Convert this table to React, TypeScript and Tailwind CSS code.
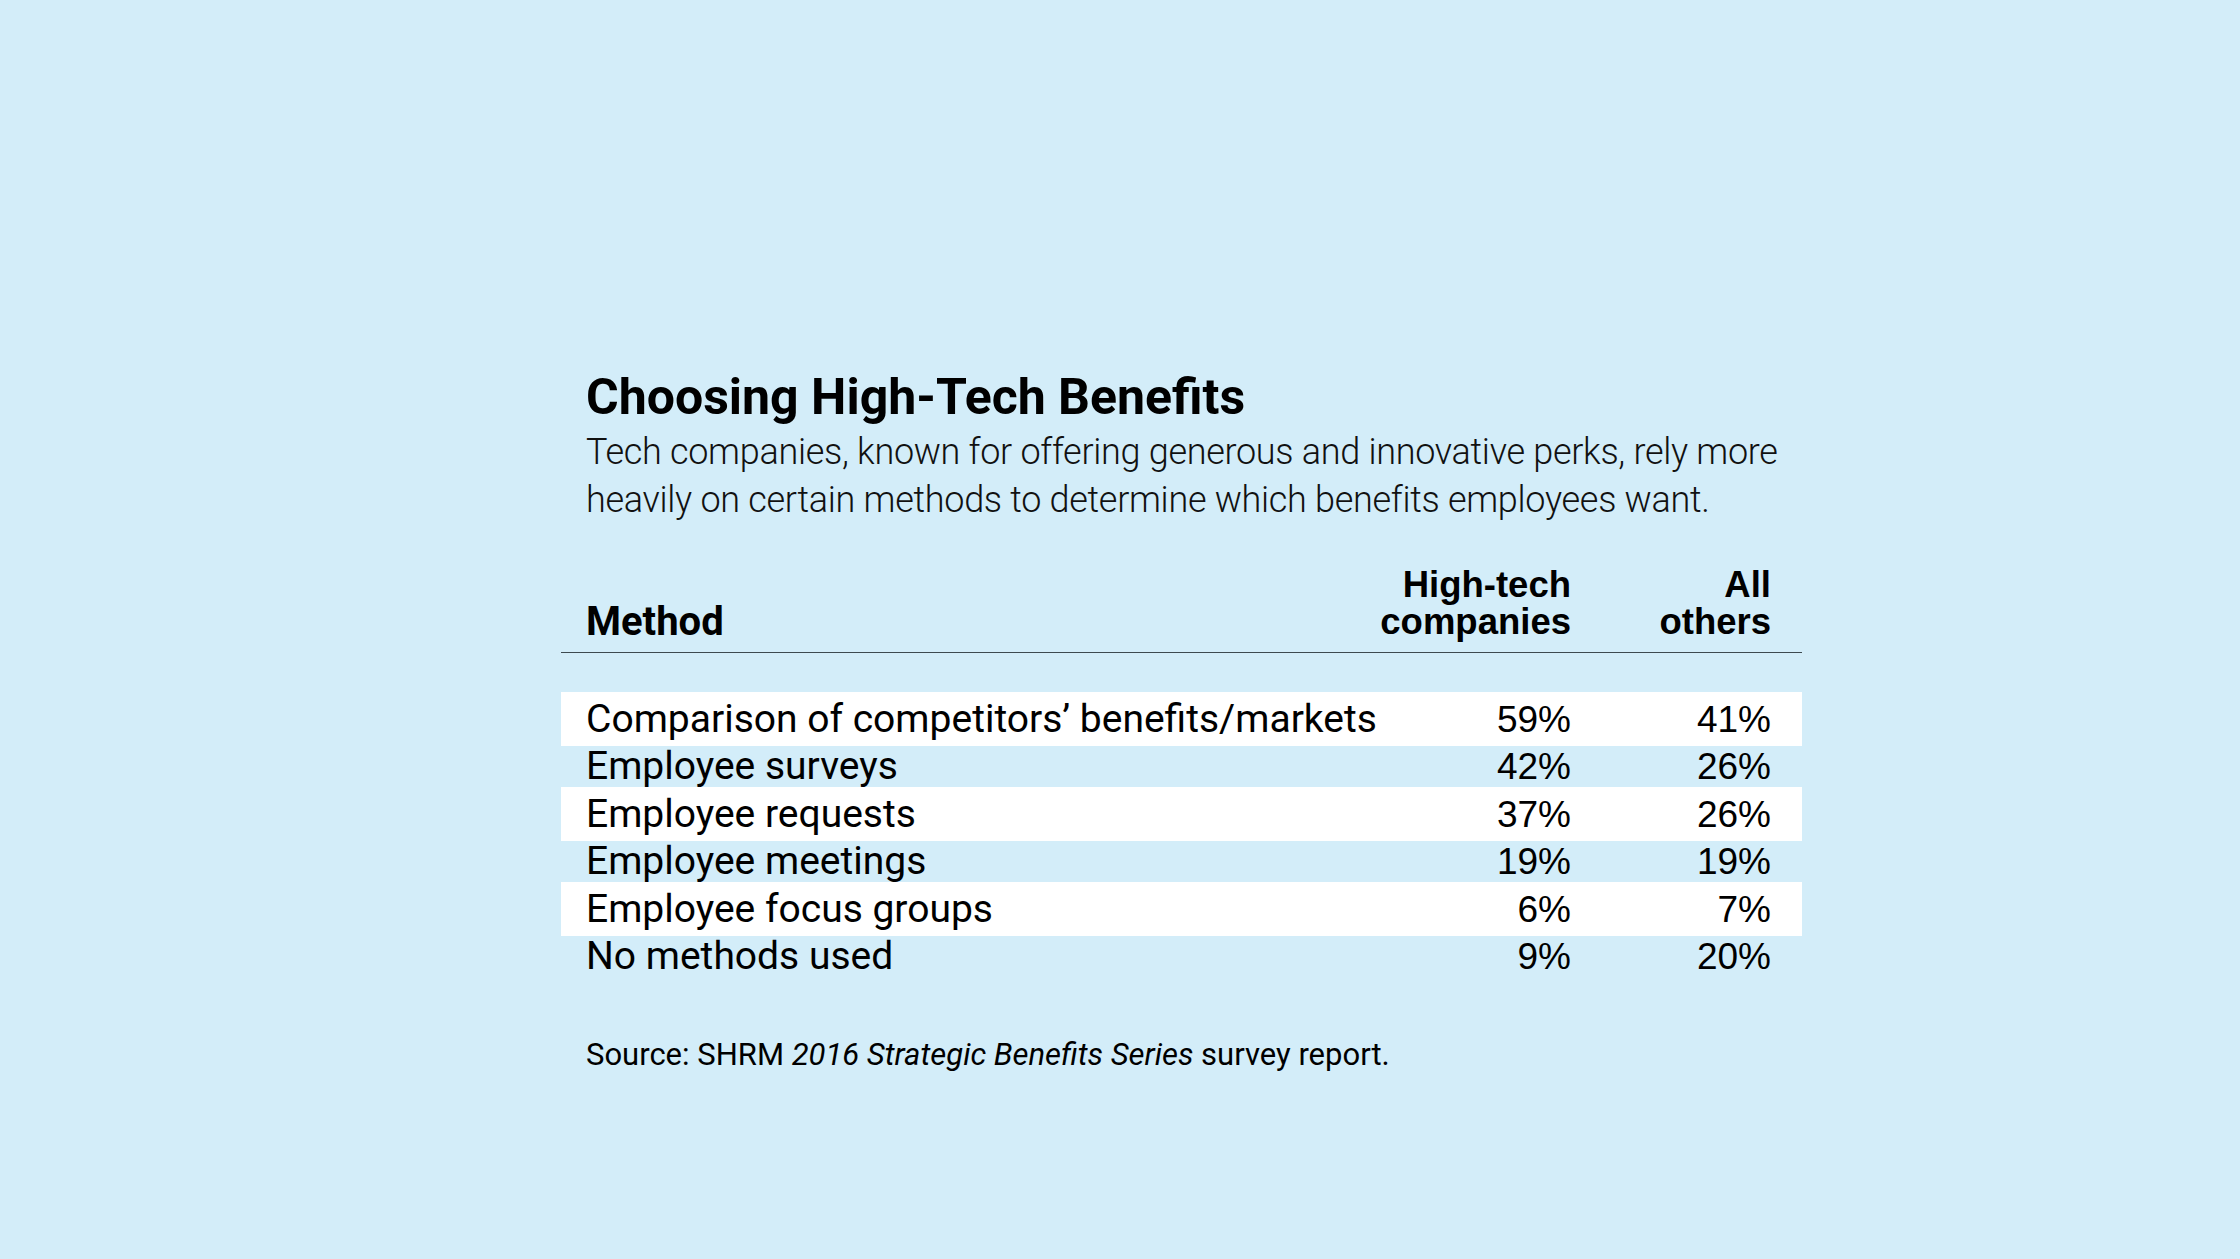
import React from 'react';

const rows = [
  { method: 'Comparison of competitors’ benefits/markets', tech: '59%', others: '41%' },
  { method: 'Employee surveys', tech: '42%', others: '26%' },
  { method: 'Employee requests', tech: '37%', others: '26%' },
  { method: 'Employee meetings', tech: '19%', others: '19%' },
  { method: 'Employee focus groups', tech: '6%', others: '7%' },
  { method: 'No methods used', tech: '9%', others: '20%' },
];

function App() {
  return (
    <div className="min-h-screen w-full bg-[#d3edf9] text-black font-['Roboto','Liberation_Sans',sans-serif]">
      <div className="ml-[561px] w-[1241px] pt-[369px] pb-20">
        {/* Title */}
        <div className="pl-[25px]">
          <h1 className="text-[50px] leading-[56px] font-bold">Choosing High-Tech Benefits</h1>
          <p className="mt-[3px] text-[36px] leading-[48px] font-light tracking-[-0.3px] text-[#111]">
            Tech companies, known for offering generous and innovative perks, rely more
            <br />
            heavily on certain methods to determine which benefits employees want.
          </p>
        </div>

        {/* Table header */}
        <div className="mt-[42px] grid grid-cols-[minmax(0,1fr)_200px_200px] items-end pl-[25px] pr-[31px] pb-[12px] border-b border-[#3d4a50]">
          <div className="text-[40px] leading-[37px] font-bold">Method</div>
          <div className="text-right text-[36.5px] leading-[37px] font-bold font-['Liberation_Sans',Arial,sans-serif]">
            High-tech
            <br />
            companies
          </div>
          <div className="text-right text-[36.5px] leading-[37px] font-bold font-['Liberation_Sans',Arial,sans-serif]">
            All
            <br />
            others
          </div>
        </div>

        {/* Rows */}
        <div className="mt-[39px]">
          {rows.map((r, i) => (
            <div
              key={r.method}
              className={
                i % 2 === 0
                  ? 'grid grid-cols-[minmax(0,1fr)_200px_200px] items-center h-[54px] bg-white pl-[25px] pr-[31px]'
                  : 'grid grid-cols-[minmax(0,1fr)_200px_200px] items-center h-[41px] pl-[25px] pr-[31px]'
              }
            >
              <div className="whitespace-nowrap text-[39px] leading-none">{r.method}</div>
              <div className="text-right text-[37px] leading-none font-['Liberation_Sans',Arial,sans-serif]">
                {r.tech}
              </div>
              <div className="text-right text-[37px] leading-none font-['Liberation_Sans',Arial,sans-serif]">
                {r.others}
              </div>
            </div>
          ))}
        </div>

        {/* Source */}
        <p className="mt-[60px] pl-[25px] text-[31px] leading-[36px]">
          Source: SHRM <em>2016 Strategic Benefits Series</em> survey report.
        </p>
      </div>
    </div>
  );
}

export default App;
